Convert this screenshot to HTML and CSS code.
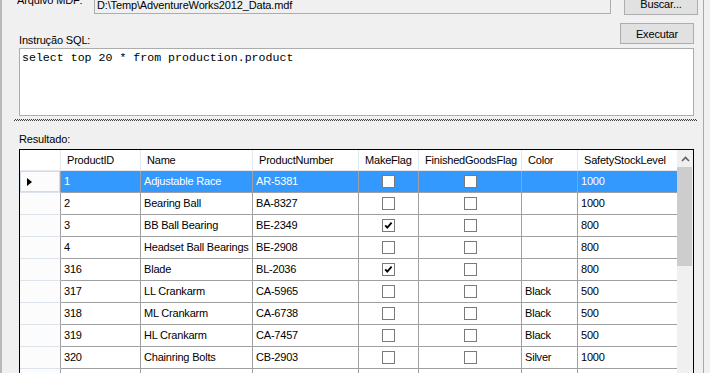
FILE: index.html
```html
<!DOCTYPE html>
<html lang="pt">
<head>
    <meta charset="UTF-8">
    <meta name="viewport" content="width=device-width, initial-scale=1.0">
    <title>Consulta MDF</title>
    <link rel="stylesheet" href="styles.css">
</head>
<body>
    <div class="window">
        <div class="top-panel">
            <div class="file-row">
                <label class="file-label">Arquivo MDF:</label>
                <div class="path-box">D:\Temp\AdventureWorks2012_Data.mdf</div>
                <button class="btn btn-search">Buscar...</button>
            </div>
            <div class="exec-row">
                <label class="sql-label">Instrução SQL:</label>
                <button class="btn btn-exec">Executar</button>
            </div>
            <div class="sql-box">select top 20 * from production.product</div>
        </div>

        <div class="splitter"></div>

        <div class="bottom-panel">
            <div class="result-label">Resultado:</div>
            <div class="grid">
                <div class="grid-body">
                    <div class="row head">
                        <div class="rowhead"></div>
                        <div class="hcell">ProductID</div>
                        <div class="hcell">Name</div>
                        <div class="hcell">ProductNumber</div>
                        <div class="hcell">MakeFlag</div>
                        <div class="hcell">FinishedGoodsFlag</div>
                        <div class="hcell">Color</div>
                        <div class="hcell last">SafetyStockLevel</div>
                    </div>
                    <div id="rows"></div>
                </div>
                <div class="scrollbar">
                    <div class="scroll-up">
                        <svg width="9" height="6" viewBox="0 0 9 6"><path d="M1 5 L4.5 1.5 L8 5" fill="none" stroke="#606060" stroke-width="1.6"/></svg>
                    </div>
                    <div class="thumb"></div>
                </div>
            </div>
        </div>
    </div>

    <script>
        const products = [
            [1, "Adjustable Race", "AR-5381", false, false, "", 1000],
            [2, "Bearing Ball", "BA-8327", false, false, "", 1000],
            [3, "BB Ball Bearing", "BE-2349", true, false, "", 800],
            [4, "Headset Ball Bearings", "BE-2908", false, false, "", 800],
            [316, "Blade", "BL-2036", true, false, "", 800],
            [317, "LL Crankarm", "CA-5965", false, false, "Black", 500],
            [318, "ML Crankarm", "CA-6738", false, false, "Black", 500],
            [319, "HL Crankarm", "CA-7457", false, false, "Black", 500],
            [320, "Chainring Bolts", "CB-2903", false, false, "Silver", 1000],
            [321, "Chainring Nut", "CN-6137", false, false, "Silver", 1000]
        ]

        function checkbox(checked) {
            let mark = ""
            if (checked) {
                mark = '<svg width="13" height="13" viewBox="0 0 13 13"><path d="M3.2 6.3 L5.3 8.6 L9.6 3.6" fill="none" stroke="#000" stroke-width="1.8"/></svg>'
            }
            return '<span class="check">' + mark + '</span>'
        }

        const rows = document.getElementById("rows")
        products.forEach((p, i) => {
            const row = document.createElement("div")
            row.className = i == 0 ? "row selected" : "row"
            row.innerHTML =
                '<div class="rowhead">' + (i == 0 ? '<span class="arrow"></span>' : '') + '</div>' +
                '<div class="cell">' + p[0] + '</div>' +
                '<div class="cell">' + p[1] + '</div>' +
                '<div class="cell">' + p[2] + '</div>' +
                '<div class="cell center">' + checkbox(p[3]) + '</div>' +
                '<div class="cell center">' + checkbox(p[4]) + '</div>' +
                '<div class="cell">' + p[5] + '</div>' +
                '<div class="cell last">' + p[6] + '</div>'
            rows.appendChild(row)
        })
    </script>
</body>
</html>
```

FILE: styles.css
```css
body {
    margin: 0;
    background-color: #f0f0f0;
    font-family: "Liberation Sans", Arial, sans-serif;
    font-size: 11px;
    letter-spacing: -0.15px;
    color: #000;
    height: 373px;
    overflow: hidden;
}

.window {
    width: 701px;
    height: 373px;
    border-left: 2px solid #b9b9b9;
    border-right: 1px solid #a9a9a9;
    overflow: hidden;
}

label {
    line-height: 13px;
}

.file-row {
    display: flex;
    align-items: flex-start;
    height: 23px;
    margin-top: -8px;
}

.file-label {
    margin: 2px 0 0 15px;
    width: 77px;
}

.path-box {
    box-sizing: border-box;
    width: 517px;
    height: 21px;
    margin-top: 1px;
    border: 1px solid #adadad;
    background-color: #f0f0f0;
    padding: 5px 2px 0;
    line-height: 13px;
    white-space: nowrap;
}

.btn {
    box-sizing: border-box;
    width: 74px;
    border: 1px solid #adadad;
    background-color: #e1e1e1;
    font-family: "Liberation Sans", Arial, sans-serif;
    font-size: 11px;
    letter-spacing: -0.15px;
    color: #000;
    padding: 0;
    margin: 0;
}

.btn-search {
    height: 23px;
    margin-left: 13px;
}

.exec-row {
    display: flex;
    height: 24px;
    margin-top: 8px;
}

.sql-label {
    align-self: flex-end;
    margin-left: 17px;
}

.btn-exec {
    height: 21px;
    margin-left: auto;
    margin-right: 9px;
}

.sql-box {
    box-sizing: border-box;
    width: 675px;
    height: 68px;
    margin: 1px 0 0 17px;
    border: 1px solid #acacac;
    background-color: #fff;
    padding: 2px 2px;
    font-family: "Liberation Mono", "DejaVu Sans Mono", monospace;
    font-size: 11.6px;
    letter-spacing: 0;
    line-height: 13px;
}

.splitter {
    width: 683px;
    height: 2px;
    margin: 3px 0 0 12px;
    background: conic-gradient(#3a3a3a 25%, transparent 0 50%, #3a3a3a 0 75%, transparent 0) 0 0 / 2px 2px;
}

.result-label {
    margin: 12px 0 0 17px;
    line-height: 13px;
    height: 13px;
}

.grid {
    display: flex;
    width: 673px;
    height: 260px;
    margin: 3px 0 0 17px;
    border: 1px solid #000;
    border-bottom: none;
    background-color: #fff;
    letter-spacing: -0.2px;
}

.grid-body {
    width: 657px;
}

.row {
    display: grid;
    grid-template-columns: 41px 80px 112px 106px 60px 103px 56px 99px;
    height: 22px;
}

.row.head {
    height: 21px;
}

.rowhead {
    box-sizing: border-box;
    background-color: #fcfcfc;
    border-right: 1px solid #a0a0a0;
    border-bottom: 1px solid #dde3ea;
    display: flex;
    align-items: center;
}

.head .rowhead {
    background-color: #fff;
    border-right: 1px solid #e3e8ee;
    border-bottom: 1px solid #e3e8ee;
}

.hcell {
    box-sizing: border-box;
    border-right: 1px solid #e3e8ee;
    border-bottom: 1px solid #e3e8ee;
    padding-left: 6px;
    line-height: 20px;
    white-space: nowrap;
    overflow: hidden;
}

.cell {
    box-sizing: border-box;
    border-right: 1px solid #a0a0a0;
    border-bottom: 1px solid #a0a0a0;
    padding-left: 3px;
    line-height: 21px;
    white-space: nowrap;
    overflow: hidden;
}

.cell.last,
.hcell.last {
    border-right: none;
}

.cell.center {
    display: flex;
    align-items: center;
    justify-content: center;
    padding-left: 0;
}

.selected .cell {
    background-color: #3399ff;
    color: #fff;
}

.selected .rowhead {
    box-shadow: inset 1px 1px 0 #d2dce8, inset -1px -1px 0 #d2dce8;
}

.arrow {
    width: 0;
    height: 0;
    margin-left: 7px;
    border-top: 4.5px solid transparent;
    border-bottom: 4.5px solid transparent;
    border-left: 5px solid #000;
}

.check {
    box-sizing: border-box;
    display: block;
    width: 13px;
    height: 13px;
    border: 1px solid #7a7a7a;
    background-color: #fff;
    margin-top: -1px;
}

.check svg {
    display: block;
    margin: -1px;
}

.scrollbar {
    width: 16px;
    background-color: #f0f0f0;
}

.scroll-up {
    height: 17px;
    display: flex;
    align-items: center;
    justify-content: center;
}

.thumb {
    width: 15px;
    height: 99px;
    background-color: #cdcdcd;
}
```
